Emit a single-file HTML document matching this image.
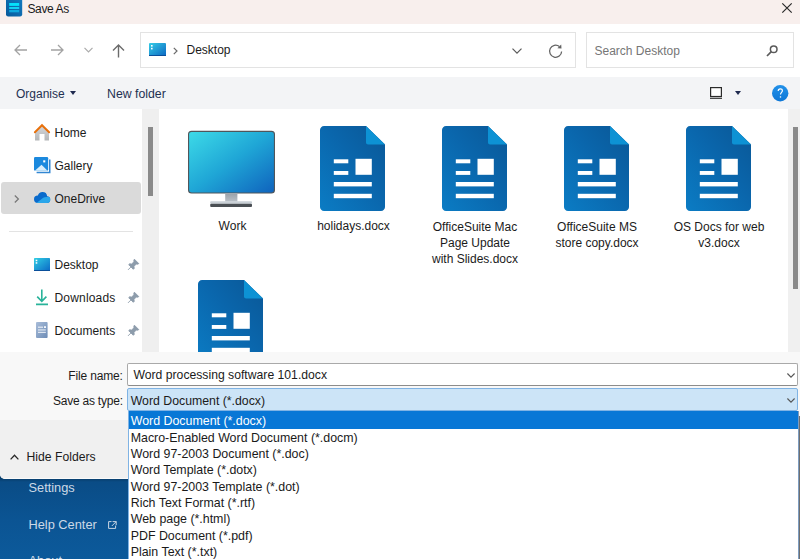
<!DOCTYPE html>
<html><head><meta charset="utf-8">
<style>
*{box-sizing:border-box;margin:0;padding:0}
html,body{width:800px;height:559px;overflow:hidden;background:#0c4f88}
body{font-family:"Liberation Sans",sans-serif;font-size:12px;color:#1b1b1b;position:relative}
.a{position:absolute}
.t{position:absolute;white-space:nowrap;line-height:14px;font-size:12px}
svg{position:absolute;overflow:visible}
#bg{left:0;top:0;width:800px;height:559px;background:linear-gradient(180deg,#083f6e 0px,#083f6e 479px,#0a4c86 482px,#0b5493 520px,#0c5a9b 559px)}
#dlg{left:0;top:0;width:800px;height:479px;background:#fff;border-bottom-left-radius:5px;overflow:hidden}
#title{left:0;top:0;width:800px;height:24px;background:#f8efed}
#nav{left:0;top:24px;width:800px;height:53px;background:#fff}
#tool{left:0;top:77px;width:800px;height:32px;background:#f3f4f6}
#side{left:0;top:109px;width:142px;height:243px;background:#fff}
#sscroll{left:142px;top:109px;width:17.2px;height:243px;background:#efefef}
#content{left:160px;top:109px;width:628px;height:243px;background:#fff;overflow:hidden}
#rscroll{left:788px;top:109px;width:12px;height:243px;background:#f0f0f0}
#bottom{left:0;top:352px;width:800px;height:126px;background:#f3f3f3}
.box{position:absolute;background:#fff;border:1px solid #e3e3e3}
.lab{color:#1b1b1b;text-align:center}
</style></head><body>
<div id="bg" class="a"></div>
<div id="dlg" class="a">
  <!-- TITLE -->
  <div id="title" class="a">
    <svg style="left:5.8px;top:-4px" width="16.2" height="20.4" viewBox="0 0 16.2 20.4">
      <defs><linearGradient id="tig" x1="0" y1="1" x2="1" y2="0"><stop offset="0" stop-color="#075a9c"/><stop offset="1" stop-color="#137cc2"/></linearGradient></defs>
      <rect x="0" y="0" width="16.2" height="20.4" rx="2.2" fill="url(#tig)"/>
      <rect x="3.2" y="7" width="10" height="2.9" fill="#05e1fb"/>
      <rect x="3.2" y="11" width="10" height="2" fill="#12d2f3"/>
      <rect x="3.2" y="14" width="10" height="2.3" fill="#0ea8de"/>
    </svg>
    <div class="t" style="left:27.5px;top:2px;font-size:12px;letter-spacing:-0.4px;color:#1a1a1a">Save As</div>
    <svg style="left:782px;top:3px" width="10" height="10" viewBox="0 0 10 10">
      <path d="M0.3 0.3L9.7 9.7M9.7 0.3L0.3 9.7" stroke="#2a2a2a" stroke-width="1.2"/>
    </svg>
  </div>
  <!-- NAV -->
  <div id="nav" class="a"></div>
  <svg style="left:14px;top:44px" width="14" height="12" viewBox="0 0 14 12">
    <path d="M13 6H1.2M6 1L1 6L6 11" stroke="#a3a3a3" stroke-width="1.3" fill="none"/>
  </svg>
  <svg style="left:50px;top:44px" width="14" height="12" viewBox="0 0 14 12">
    <path d="M1 6H12.8M8 1L13 6L8 11" stroke="#a3a3a3" stroke-width="1.3" fill="none"/>
  </svg>
  <svg style="left:84px;top:47px" width="9" height="6" viewBox="0 0 9 6">
    <path d="M0.5 0.8L4.5 4.8L8.5 0.8" stroke="#ababab" stroke-width="1.2" fill="none"/>
  </svg>
  <svg style="left:112px;top:43.5px" width="13" height="14" viewBox="0 0 13 14">
    <path d="M6.5 13.5V1.2M1 6.5L6.5 1L12 6.5" stroke="#6b6b6b" stroke-width="1.4" fill="none"/>
  </svg>
  <div class="box" style="left:140px;top:32px;width:436px;height:36px"></div>
  <svg style="left:149px;top:42.5px" width="17" height="13" viewBox="0 0 17 13">
    <defs><linearGradient id="dg" x1="0" y1="0" x2="1" y2="1"><stop offset="0" stop-color="#35cde6"/><stop offset="1" stop-color="#0c66c2"/></linearGradient></defs>
    <rect x="0" y="0" width="17" height="13" rx="1" fill="url(#dg)"/>
    <rect x="0" y="12" width="17" height="1" fill="#0a4f9a"/>
    <rect x="2" y="2" width="1.6" height="1.6" fill="#fff"/>
    <rect x="2" y="4.8" width="1.6" height="1.6" fill="#fff"/>
  </svg>
  <svg style="left:172.5px;top:47px" width="5" height="8" viewBox="0 0 5 8">
    <path d="M0.8 0.8L4 4L0.8 7.2" stroke="#6a6a6a" stroke-width="1.2" fill="none"/>
  </svg>
  <div class="t" style="left:186.5px;top:42.5px;color:#1b1b1b">Desktop</div>
  <svg style="left:512px;top:48px" width="10" height="6" viewBox="0 0 10 6">
    <path d="M0.5 0.6L5 5.2L9.5 0.6" stroke="#5a5a5a" stroke-width="1.2" fill="none"/>
  </svg>
  <svg style="left:549px;top:44px" width="14" height="14" viewBox="0 0 14 14">
    <path d="M10.4 2.6A6 6 0 1 0 12.6 7.4" stroke="#636363" stroke-width="1.25" fill="none"/>
    <path d="M8.4 4.3L12.5 4.5L12.2 0.4Z" fill="#636363"/>
  </svg>
  <div class="box" style="left:586px;top:32px;width:208px;height:36px"></div>
  <div class="t" style="left:594.5px;top:43.5px;color:#767676">Search Desktop</div>
  <svg style="left:766px;top:45px" width="12" height="12" viewBox="0 0 12 12">
    <circle cx="7.7" cy="4.3" r="3.3" stroke="#5a5a5a" stroke-width="1.5" fill="none"/>
    <path d="M5.3 6.7L1 11" stroke="#5a5a5a" stroke-width="1.7"/>
  </svg>
  <!-- TOOLBAR -->
  <div id="tool" class="a"></div>
  <div class="t" style="left:16px;top:86.5px;color:#1f3152">Organise</div>
  <svg style="left:70px;top:91px" width="6" height="4" viewBox="0 0 6 4"><path d="M0 0H6L3 4Z" fill="#1f2a4f"/></svg>
  <div class="t" style="left:107px;top:86.5px;font-size:12.3px;color:#1f3152">New folder</div>
  <svg style="left:710px;top:87px" width="12" height="12" viewBox="0 0 12 12">
    <rect x="0.6" y="0.6" width="10.8" height="8.9" stroke="#2b2b2b" stroke-width="1.2" fill="#fff"/>
    <path d="M0 11.3H12" stroke="#2b2b2b" stroke-width="1.1"/>
  </svg>
  <svg style="left:735px;top:91px" width="6" height="4" viewBox="0 0 6 4"><path d="M0 0H6L3 4Z" fill="#1f2a4f"/></svg>
  <svg style="left:772px;top:84.9px" width="16.4" height="16.4" viewBox="0 0 16.4 16.4">
    <defs><linearGradient id="hlp" x1="0" y1="0" x2="0" y2="1"><stop offset="0" stop-color="#2291e9"/><stop offset="1" stop-color="#0e77d6"/></linearGradient></defs>
    <circle cx="8.2" cy="8.2" r="8.2" fill="url(#hlp)"/>
    <path d="M6.2 6C6.2 4.7 7.1 3.9 8.3 3.9C9.5 3.9 10.4 4.7 10.4 5.8C10.4 7.3 8.5 7.4 8.5 9.5" stroke="#fff" stroke-width="1.15" fill="none"/>
    <rect x="7.85" y="11.3" width="1.3" height="1.3" fill="#fff"/>
  </svg>
  <!-- SIDEBAR -->
  <div id="side" class="a"></div>
  <div id="sscroll" class="a"></div>
  <div class="a" style="left:148px;top:127px;width:4.8px;height:69px;background:#8a8a8a"></div>
  <div class="a" style="left:1px;top:182px;width:140px;height:32px;background:#dadada;border-radius:3px"></div>
  <!-- home -->
  <svg style="left:34px;top:124px" width="16" height="17" viewBox="0 0 16 17">
    <defs><linearGradient id="hg" x1="0" y1="0" x2="0" y2="1"><stop offset="0" stop-color="#d5d7da"/><stop offset="1" stop-color="#b4b6b8"/></linearGradient></defs>
    <path d="M8 1.5L15 8.2V16.5H10.5V10H5.5V16.5H1V8.2Z" fill="url(#hg)"/>
    <path d="M0.9 8.3L8 1.2L15.1 8.3" stroke="#e8710c" stroke-width="2" fill="none" stroke-linecap="round"/>
  </svg>
  <div class="t" style="left:54.5px;top:126.3px">Home</div>
  <!-- gallery -->
  <svg style="left:33.5px;top:157px" width="17" height="17" viewBox="0 0 17 17">
    <path d="M15 2.6V14.7H2.6V16.3H16.5V2.6Z" fill="#3286d2"/>
    <rect x="0" y="0" width="14.2" height="13.8" rx="1.2" fill="#1b89de"/>
    <path d="M0.8 13.8L7.5 7.8L13.6 13.8Z" fill="#d9eefb"/>
    <rect x="9.2" y="3.3" width="2.1" height="2.1" fill="#fff"/>
  </svg>
  <div class="t" style="left:54.5px;top:159.3px">Gallery</div>
  <!-- onedrive -->
  <svg style="left:14px;top:195px" width="6" height="8" viewBox="0 0 6 8">
    <path d="M0.8 0.5L4.4 4L0.8 7.5" stroke="#777" stroke-width="1.2" fill="none"/>
  </svg>
  <svg style="left:33.7px;top:192.2px" width="16.4" height="11" viewBox="0 0 16.4 11">
    <defs><clipPath id="cl"><circle cx="3.7" cy="7.3" r="3.7"/><circle cx="8.5" cy="4.7" r="4.7"/><circle cx="13" cy="7.6" r="3.35"/><rect x="3.5" y="6" width="9.5" height="4.95"/></clipPath></defs>
    <g clip-path="url(#cl)">
      <rect x="0" y="0" width="16.4" height="11" fill="#0a6bcc"/>
      <path d="M1.8 11.5L8.6 6.2C10 5.3 11.5 5.1 13.5 5.1L17 5.1V11.5Z" fill="#2aa6ea"/>
    </g>
  </svg>
  <div class="t" style="left:54.5px;top:192.3px">OneDrive</div>
  <div class="a" style="left:9px;top:231px;width:124px;height:1px;background:#e3e3e3"></div>
  <!-- desktop -->
  <svg style="left:34px;top:258px" width="16" height="13" viewBox="0 0 16 13">
    <defs><linearGradient id="dg2" x1="0" y1="0" x2="1" y2="1"><stop offset="0" stop-color="#30cfe4"/><stop offset="1" stop-color="#0b68c6"/></linearGradient></defs>
    <rect x="0" y="0" width="16" height="13" rx="0.8" fill="url(#dg2)"/>
    <rect x="0" y="12" width="16" height="1" fill="#0a4f9a"/>
    <rect x="1.7" y="1.7" width="1.6" height="1.5" fill="#fff"/>
    <rect x="1.7" y="4.2" width="1.6" height="1.5" fill="#fff"/>
  </svg>
  <div class="t" style="left:54.5px;top:258.2px">Desktop</div>
  <!-- downloads -->
  <svg style="left:36px;top:289px" width="12" height="17" viewBox="0 0 12 17">
    <path d="M5.8 0.4V12.6M1.2 7.6L5.8 12.4L10.4 7.6" stroke="#29b39a" stroke-width="1.6" fill="none"/>
    <path d="M0 15.4H12" stroke="#29b39a" stroke-width="1.6"/>
  </svg>
  <div class="t" style="left:54.5px;top:291.2px;letter-spacing:0.18px">Downloads</div>
  <!-- documents -->
  <svg style="left:36.2px;top:322.1px" width="12" height="16" viewBox="0 0 12 16">
    <defs><linearGradient id="docg" x1="0" y1="0" x2="1" y2="1"><stop offset="0" stop-color="#a9bdd9"/><stop offset="1" stop-color="#6d8cb6"/></linearGradient></defs>
    <rect x="0" y="0" width="11.6" height="16" rx="1" fill="url(#docg)"/>
    <rect x="2" y="4.6" width="5" height="1.2" fill="#e8eef6"/>
    <rect x="8" y="4.2" width="2" height="1.8" fill="#f4f7fb"/>
    <rect x="2" y="7.4" width="7.8" height="1.1" fill="#e8eef6"/>
    <rect x="2" y="9.8" width="7.8" height="1.1" fill="#e8eef6"/>
  </svg>
  <div class="t" style="left:54.5px;top:324.2px">Documents</div>
  <!-- pins -->
  <svg style="left:127.5px;top:259px" width="11" height="11" viewBox="0 0 11 11"><path id="pin" d="M6.4 0.2L10.8 4.6L9.6 5.2L8.2 5L6 7.4L6.2 9.4L5.3 10.3L0.7 5.7L1.6 4.8L3.6 5L6 2.8L5.8 1.4Z M3 7.9L0 10.9" fill="#8d9cab" stroke="#8d9cab" stroke-width="0.9"/></svg>
  <svg style="left:127.5px;top:292px" width="11" height="11" viewBox="0 0 11 11"><path d="M6.4 0.2L10.8 4.6L9.6 5.2L8.2 5L6 7.4L6.2 9.4L5.3 10.3L0.7 5.7L1.6 4.8L3.6 5L6 2.8L5.8 1.4Z M3 7.9L0 10.9" fill="#8d9cab" stroke="#8d9cab" stroke-width="0.9"/></svg>
  <svg style="left:127.5px;top:325px" width="11" height="11" viewBox="0 0 11 11"><path d="M6.4 0.2L10.8 4.6L9.6 5.2L8.2 5L6 7.4L6.2 9.4L5.3 10.3L0.7 5.7L1.6 4.8L3.6 5L6 2.8L5.8 1.4Z M3 7.9L0 10.9" fill="#8d9cab" stroke="#8d9cab" stroke-width="0.9"/></svg>
  <!-- CONTENT -->
  <div id="content" class="a"></div>
  <svg style="left:0;top:0" width="0" height="0"><defs>
    <linearGradient id="docgrad" x1="0" y1="1" x2="1" y2="0"><stop offset="0" stop-color="#0b7cc4"/><stop offset="0.55" stop-color="#0a66ac"/><stop offset="1" stop-color="#0a5796"/></linearGradient>
    <linearGradient id="scr" x1="0" y1="0" x2="1" y2="1"><stop offset="0" stop-color="#3ddbe8"/><stop offset="0.5" stop-color="#1fa6d6"/><stop offset="1" stop-color="#0f62bd"/></linearGradient>
    <linearGradient id="neck" x1="0" y1="0" x2="0" y2="1"><stop offset="0" stop-color="#9aa2aa"/><stop offset="1" stop-color="#b9c0c7"/></linearGradient>
  </defs></svg>
  <svg style="left:188px;top:130.5px" width="87" height="76" viewBox="0 0 87 76">
    <rect x="0.55" y="0.35" width="85.9" height="61.6" rx="3" fill="url(#scr)" stroke="#50565b" stroke-width="1.1"/>
    <rect x="37.2" y="62.6" width="12.2" height="8" fill="url(#neck)"/>
    <rect x="22.2" y="70.2" width="41.8" height="2.6" rx="0.8" fill="#c9d0d6"/>
    <rect x="22.2" y="72.7" width="41.8" height="3.2" rx="1" fill="#4a4f54"/>
  </svg>
  <div class="t lab" style="left:172.5px;top:219px;width:120px">Work</div>
<svg style="left:320px;top:125.5px" width="65" height="85" viewBox="0 0 65 85">
    <path d="M4 0H46L65 18.5V81C65 83.2 63.2 85 61 85H4C1.8 85 0 83.2 0 81V4C0 1.8 1.8 0 4 0Z" fill="url(#docgrad)"/>
    <path d="M46 0L65 18.5H48C46.9 18.5 46 17.6 46 16.5Z" fill="#0d92d4"/>
    <rect x="13.8" y="33.3" width="14.5" height="4" fill="#fff"/>
    <rect x="13.8" y="45" width="14.5" height="3.9" fill="#fff"/>
    <rect x="35.5" y="32.8" width="16.3" height="16" fill="#fff"/>
    <rect x="13.8" y="56" width="38" height="4.4" fill="#fff"/>
    <rect x="13.8" y="67.8" width="38" height="4.4" fill="#fff"/>
  </svg>
  <div class="t lab" style="left:293.5px;top:219px;width:120px">holidays.docx</div>
<svg style="left:442px;top:125.5px" width="65" height="85" viewBox="0 0 65 85">
    <path d="M4 0H46L65 18.5V81C65 83.2 63.2 85 61 85H4C1.8 85 0 83.2 0 81V4C0 1.8 1.8 0 4 0Z" fill="url(#docgrad)"/>
    <path d="M46 0L65 18.5H48C46.9 18.5 46 17.6 46 16.5Z" fill="#0d92d4"/>
    <rect x="13.8" y="33.3" width="14.5" height="4" fill="#fff"/>
    <rect x="13.8" y="45" width="14.5" height="3.9" fill="#fff"/>
    <rect x="35.5" y="32.8" width="16.3" height="16" fill="#fff"/>
    <rect x="13.8" y="56" width="38" height="4.4" fill="#fff"/>
    <rect x="13.8" y="67.8" width="38" height="4.4" fill="#fff"/>
  </svg>
  <div class="t lab" style="left:415px;top:218.5px;width:120px;line-height:16.25px;white-space:normal">OfficeSuite Mac<br>Page Update<br>with Slides.docx</div>
<svg style="left:564px;top:125.5px" width="65" height="85" viewBox="0 0 65 85">
    <path d="M4 0H46L65 18.5V81C65 83.2 63.2 85 61 85H4C1.8 85 0 83.2 0 81V4C0 1.8 1.8 0 4 0Z" fill="url(#docgrad)"/>
    <path d="M46 0L65 18.5H48C46.9 18.5 46 17.6 46 16.5Z" fill="#0d92d4"/>
    <rect x="13.8" y="33.3" width="14.5" height="4" fill="#fff"/>
    <rect x="13.8" y="45" width="14.5" height="3.9" fill="#fff"/>
    <rect x="35.5" y="32.8" width="16.3" height="16" fill="#fff"/>
    <rect x="13.8" y="56" width="38" height="4.4" fill="#fff"/>
    <rect x="13.8" y="67.8" width="38" height="4.4" fill="#fff"/>
  </svg>
  <div class="t lab" style="left:537px;top:218.5px;width:120px;line-height:16.25px">OfficeSuite MS<br>store copy.docx</div>
<svg style="left:686px;top:125.5px" width="65" height="85" viewBox="0 0 65 85">
    <path d="M4 0H46L65 18.5V81C65 83.2 63.2 85 61 85H4C1.8 85 0 83.2 0 81V4C0 1.8 1.8 0 4 0Z" fill="url(#docgrad)"/>
    <path d="M46 0L65 18.5H48C46.9 18.5 46 17.6 46 16.5Z" fill="#0d92d4"/>
    <rect x="13.8" y="33.3" width="14.5" height="4" fill="#fff"/>
    <rect x="13.8" y="45" width="14.5" height="3.9" fill="#fff"/>
    <rect x="35.5" y="32.8" width="16.3" height="16" fill="#fff"/>
    <rect x="13.8" y="56" width="38" height="4.4" fill="#fff"/>
    <rect x="13.8" y="67.8" width="38" height="4.4" fill="#fff"/>
  </svg>
  <div class="t lab" style="left:659px;top:218.5px;width:120px;line-height:16.25px">OS Docs for web<br>v3.docx</div>
<svg style="left:198.2px;top:280px" width="65" height="85" viewBox="0 0 65 85">
    <path d="M4 0H46L65 18.5V81C65 83.2 63.2 85 61 85H4C1.8 85 0 83.2 0 81V4C0 1.8 1.8 0 4 0Z" fill="url(#docgrad)"/>
    <path d="M46 0L65 18.5H48C46.9 18.5 46 17.6 46 16.5Z" fill="#0d92d4"/>
    <rect x="13.8" y="33.3" width="14.5" height="4" fill="#fff"/>
    <rect x="13.8" y="45" width="14.5" height="3.9" fill="#fff"/>
    <rect x="35.5" y="32.8" width="16.3" height="16" fill="#fff"/>
    <rect x="13.8" y="56" width="38" height="4.4" fill="#fff"/>
    <rect x="13.8" y="67.8" width="38" height="4.4" fill="#fff"/>
  </svg>
  <div id="rscroll" class="a"></div>
  <div class="a" style="left:793px;top:127px;width:4.5px;height:161.5px;background:#8a8a8a"></div>
  <!-- BOTTOM -->
  <div class="a" style="left:0;top:352px;width:800px;height:68px;background:#f8f8f8"></div>
  <div class="a" style="left:0;top:420px;width:800px;height:58px;background:#f0f0f0"></div>
  <div class="a" style="left:0;top:478px;width:800px;height:1px;background:#fafafa"></div>
  <div class="t" style="left:0;top:368.5px;width:122.8px;text-align:right;letter-spacing:-0.15px">File name:</div>
  <div class="t" style="left:0;top:393.7px;width:122.8px;text-align:right;letter-spacing:-0.22px">Save as type:</div>
  <div class="a" style="left:127px;top:363px;width:671px;height:23px;background:#fff;border:1.3px solid #a9a9a9;border-bottom-color:#8c8c8c;border-radius:2px"></div>
  <div class="t" style="left:133.5px;top:367.8px;font-size:12.2px">Word processing software 101.docx</div>
  <svg style="left:787px;top:372.5px" width="8" height="5" viewBox="0 0 8 5"><path d="M0.4 0.5L4 4.2L7.6 0.5" stroke="#555" stroke-width="1.1" fill="none"/></svg>
  <div class="a" style="left:127.3px;top:388.4px;width:670.7px;height:23px;background:#cce4f7;border:1px solid #7fb3e4;border-radius:2px"></div>
  <div class="t" style="left:130.7px;top:393.8px;font-size:12.3px">Word Document (*.docx)</div>
  <svg style="left:787px;top:398px" width="8" height="5" viewBox="0 0 8 5"><path d="M0.4 0.5L4 4.2L7.6 0.5" stroke="#555" stroke-width="1.1" fill="none"/></svg>
  <svg style="left:10px;top:454px" width="9" height="6" viewBox="0 0 9 6"><path d="M0.6 5.4L4.5 1.2L8.4 5.4" stroke="#2a2a2a" stroke-width="1.3" fill="none"/></svg>
  <div class="t" style="left:26.5px;top:449.8px;font-size:12.2px">Hide Folders</div>
</div>
<div class="t" style="left:28.5px;top:481.2px;font-size:12.8px;color:#ccd9e6">Settings</div>
<div class="t" style="left:28.5px;top:518.4px;font-size:12.8px;color:#ccd9e6">Help Center</div>
<svg style="left:108px;top:521px" width="9" height="8" viewBox="0 0 9 8"><path d="M3.5 0.6H0.6V7.4H7.6V4.6M4.6 0.6H8.2V4.2M8.2 0.6L3.8 5" stroke="#c9d6e3" stroke-width="1" fill="none"/></svg>
<div class="t" style="left:28.5px;top:553.5px;font-size:12.8px;color:#ccd9e6">About</div>
<div class="a" style="left:127.5px;top:411px;width:671px;height:148px;background:#fff;border-left:1.5px solid #7fb3e4"></div>
<div class="a" style="left:797.5px;top:411px;width:1px;height:148px;background:#7d9cc0"></div>
<div class="a" style="left:798.5px;top:416px;width:1.5px;height:143px;background:#6f6f6f"></div>
<div class="a" style="left:129px;top:411px;width:669px;height:17.5px;background:#0877d6"></div>
<div class="t" style="left:130.7px;top:414.15px;font-size:12.4px;color:#fff">Word Document (*.docx)</div>
<div class="t" style="left:130.7px;top:430.50px;font-size:12.4px;color:#1a1a1a">Macro-Enabled Word Document (*.docm)</div>
<div class="t" style="left:130.7px;top:446.85px;font-size:12.4px;color:#1a1a1a">Word 97-2003 Document (*.doc)</div>
<div class="t" style="left:130.7px;top:463.20px;font-size:12.4px;color:#1a1a1a">Word Template (*.dotx)</div>
<div class="t" style="left:130.7px;top:479.55px;font-size:12.4px;color:#1a1a1a">Word 97-2003 Template (*.dot)</div>
<div class="t" style="left:130.7px;top:495.90px;font-size:12.4px;color:#1a1a1a">Rich Text Format (*.rtf)</div>
<div class="t" style="left:130.7px;top:512.25px;font-size:12.4px;color:#1a1a1a">Web page (*.html)</div>
<div class="t" style="left:130.7px;top:528.60px;font-size:12.4px;color:#1a1a1a">PDF Document (*.pdf)</div>
<div class="t" style="left:130.7px;top:544.95px;font-size:12.4px;color:#1a1a1a">Plain Text (*.txt)</div>
</body></html>
